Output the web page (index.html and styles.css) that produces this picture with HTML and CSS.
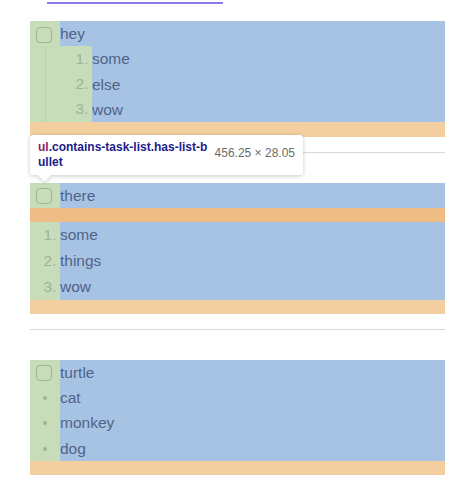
FILE: index.html
```html
<!DOCTYPE html>
<html>
<head>
<meta charset="utf-8">
<link rel="stylesheet" href="styles.css">
</head>
<body>
<div class="page">
  <div class="link-line"></div>

  <section class="block block-first">
    <div class="row">
      <div class="gutter"><span class="checkbox"></span></div>
      <div class="content">hey</div>
    </div>
    <div class="nested">
      <div class="row">
        <div class="gutter wide"><span class="guide"></span><span class="num">1.</span></div>
        <div class="content">some</div>
      </div>
      <div class="row">
        <div class="gutter wide"><span class="guide"></span><span class="num">2.</span></div>
        <div class="content">else</div>
      </div>
      <div class="row">
        <div class="gutter wide"><span class="guide"></span><span class="num">3.</span></div>
        <div class="content">wow</div>
      </div>
    </div>
    <div class="margin light"></div>
  </section>

  <div class="rule rule-first"></div>

  <section class="block block-second">
    <div class="row">
      <div class="gutter"><span class="checkbox"></span></div>
      <div class="content">there</div>
    </div>
    <div class="margin dark"></div>
    <div class="row tall">
      <div class="gutter"><span class="num">1.</span></div>
      <div class="content">some</div>
    </div>
    <div class="row tall">
      <div class="gutter"><span class="num">2.</span></div>
      <div class="content">things</div>
    </div>
    <div class="row tall">
      <div class="gutter"><span class="num">3.</span></div>
      <div class="content">wow</div>
    </div>
    <div class="margin light"></div>

    <div class="tooltip">
      <div class="tip-name"><span class="tag">ul</span>.contains-task-list.has-list-b<br>ullet</div>
      <div class="tip-size">456.25 × 28.05</div>
      <span class="tip-arrow"></span>
    </div>
  </section>

  <div class="rule"></div>

  <section class="block block-third">
    <div class="row">
      <div class="gutter"><span class="checkbox"></span></div>
      <div class="content">turtle</div>
    </div>
    <div class="row">
      <div class="gutter"><span class="dot"></span></div>
      <div class="content">cat</div>
    </div>
    <div class="row">
      <div class="gutter"><span class="dot"></span></div>
      <div class="content">monkey</div>
    </div>
    <div class="row">
      <div class="gutter"><span class="dot"></span></div>
      <div class="content">dog</div>
    </div>
    <div class="margin light"></div>
  </section>
</div>
</body>
</html>
```

FILE: styles.css
```css
html, body {
  margin: 0;
  padding: 0;
  background: #ffffff;
}

body {
  font-family: "Liberation Sans", Arial, sans-serif;
  width: 474px;
  height: 498px;
  overflow: hidden;
}

.page {
  padding-top: 2px;
}

.link-line {
  margin-left: 47px;
  width: 176px;
  height: 1.5px;
  background: #8e78e8;
}

.block {
  margin-left: 30px;
  width: 415px;
  position: relative;
}

.block-first {
  margin-top: 17.5px;
}

.block-second {
  margin-top: 30px;
}

.block-third {
  margin-top: 30px;
}

.row {
  display: flex;
  height: 25.25px;
}

.row.tall {
  height: 26px;
}

.gutter {
  width: 30px;
  background: #c7ddba;
  position: relative;
  display: flex;
  align-items: center;
  justify-content: flex-end;
  flex-shrink: 0;
}

.gutter.wide {
  width: 62px;
}

.content {
  flex: 1;
  background: #a7c3e4;
  color: #50648a;
  font-size: 15.5px;
  line-height: 25px;
  display: flex;
  align-items: center;
}

.checkbox {
  position: absolute;
  left: 6px;
  top: 5.5px;
  width: 14px;
  height: 14px;
  border: 1px solid #9db391;
  border-radius: 4px;
}

.guide {
  position: absolute;
  left: 15px;
  top: 0;
  bottom: 0;
  width: 1px;
  background: #b6cda9;
}

.num {
  color: #9fb297;
  font-size: 15.5px;
  padding-right: 3.5px;
}

.dot {
  position: absolute;
  left: 13px;
  top: 11px;
  width: 4px;
  height: 4px;
  border-radius: 50%;
  background: #a0b397;
}

.margin {
  height: 14.5px;
}

.margin.light {
  background: #f2cea0;
}

.margin.dark {
  height: 14px;
  background: #eebc84;
}

.rule {
  margin-left: 30px;
  width: 415px;
  height: 1px;
  background: #d8d8d8;
  margin-top: 14.5px;
}

.rule-first {
  margin-top: 15px;
}

.tooltip {
  position: absolute;
  left: 0;
  top: -48px;
  width: 273px;
  height: 40px;
  box-sizing: border-box;
  background: #ffffff;
  border-radius: 3px;
  box-shadow: 0 1px 4px rgba(0, 0, 0, 0.22);
  display: flex;
  justify-content: space-between;
  align-items: center;
  padding: 0 8px;
}

.tip-name {
  font-size: 12px;
  font-weight: bold;
  line-height: 14.5px;
  color: #1c1c8c;
}

.tip-name .tag {
  color: #8c1d6e;
}

.tip-size {
  font-size: 12px;
  color: #6b6b6b;
  padding-bottom: 3px;
}

.tip-arrow {
  position: absolute;
  left: 10px;
  bottom: -5px;
  width: 9px;
  height: 9px;
  background: #ffffff;
  transform: rotate(45deg);
  box-shadow: 2px 2px 3px rgba(0, 0, 0, 0.12);
}
```
